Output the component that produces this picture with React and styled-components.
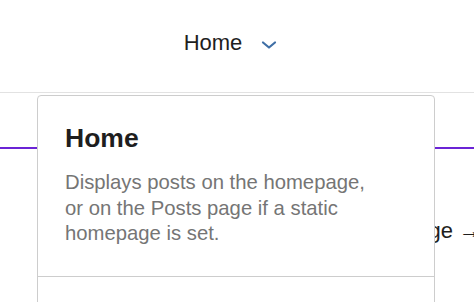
import React from "react";
import styled, { createGlobalStyle } from "styled-components";

const GlobalStyle = createGlobalStyle`
  html, body {
    margin: 0;
    padding: 0;
    background: #ffffff;
    font-family: "Liberation Sans", Arial, sans-serif;
  }
`;

const Page = styled.div`
  position: relative;
  width: 474px;
  height: 302px;
  overflow: hidden;
  background: #ffffff;
`;

const Header = styled.div`
  height: 93px;
  border-bottom: 1px solid #e2e2e2;
  display: flex;
  align-items: center;
  justify-content: center;
  gap: 19px;
  padding: 0 13px 6px 0;
  box-sizing: border-box;
`;

const HeaderTitle = styled.span`
  font-size: 22px;
  color: #1e1e1e;
  line-height: 1;
`;

const Chevron = styled.svg`
  width: 16px;
  height: 10px;
  margin-top: 3px;
`;

const Content = styled.div`
  padding-top: 54px;
`;

const AccentLine = styled.div`
  height: 2px;
  background: #6b24d6;
`;

const BehindText = styled.div`
  padding: 69px 0 0 404px;
  font-size: 22px;
  color: #1e1e1e;
  white-space: nowrap;
`;

/* dropdown popover sitting over the page */
const Popover = styled.div`
  position: absolute;
  top: 95px;
  left: 37px;
  width: 398px;
  height: 240px;
  box-sizing: border-box;
  background: #ffffff;
  border: 1.5px solid #cdcdcd;
  border-radius: 4px 4px 0 0;
`;

const Option = styled.div`
  padding: 26px 20px 0 27px;
  height: 181px;
  box-sizing: border-box;
  border-bottom: 1.5px solid #cdcdcd;
`;

const OptionTitle = styled.div`
  font-size: 26.5px;
  font-weight: 700;
  color: #1e1e1e;
  line-height: 32px;
`;

const OptionDesc = styled.div`
  margin-top: 16px;
  font-size: 20.3px;
  line-height: 25.5px;
  color: #757575;
`;

export default function App() {
  return (
    <>
      <GlobalStyle />
      <Page>
        <Header>
          <HeaderTitle>Home</HeaderTitle>
          <Chevron viewBox="0 0 16 10" fill="none">
            <path d="M2 2.5 L8 7.5 L14 2.5" stroke="#3f6fa6" strokeWidth="2.2" strokeLinecap="round" strokeLinejoin="round" />
          </Chevron>
        </Header>
        <Content>
          <AccentLine />
          <BehindText>page →</BehindText>
        </Content>
        <Popover>
          <Option>
            <OptionTitle>Home</OptionTitle>
            <OptionDesc>
              Displays posts on the homepage,
              <br />
              or on the Posts page if a static
              <br />
              homepage is set.
            </OptionDesc>
          </Option>
        </Popover>
      </Page>
    </>
  );
}
